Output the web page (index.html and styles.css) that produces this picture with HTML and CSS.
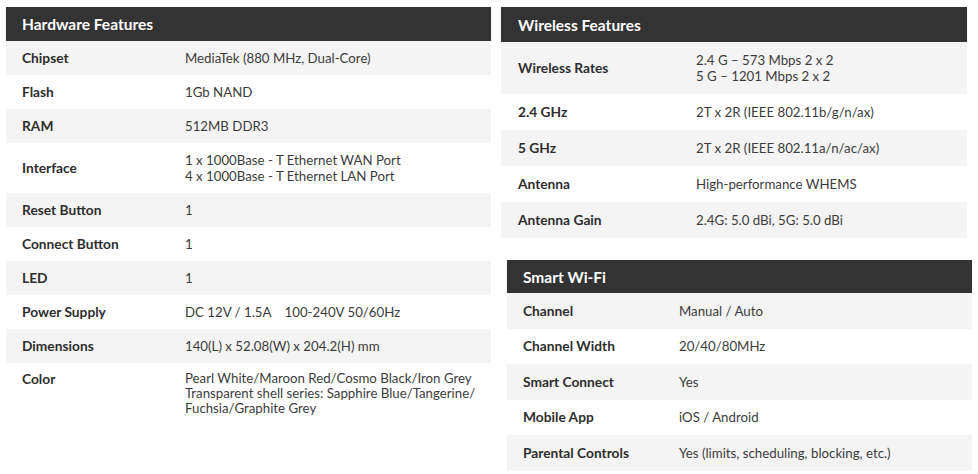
FILE: index.html
```html
<!DOCTYPE html>
<html>
<head>
<meta charset="utf-8">
<link rel="stylesheet" href="styles.css">
</head>
<body>
<div class="page">
  <div class="col col-left">
    <section class="spec spec-hw">
      <div class="spec-head">Hardware Features</div>
      <div class="row"><div class="lbl">Chipset</div><div class="val">MediaTek (880 MHz, Dual-Core)</div></div>
      <div class="row"><div class="lbl">Flash</div><div class="val">1Gb NAND</div></div>
      <div class="row"><div class="lbl">RAM</div><div class="val">512MB DDR3</div></div>
      <div class="row"><div class="lbl">Interface</div><div class="val">1 x 1000Base - T Ethernet WAN Port<br>4 x 1000Base - T Ethernet LAN Port</div></div>
      <div class="row"><div class="lbl">Reset Button</div><div class="val">1</div></div>
      <div class="row"><div class="lbl">Connect Button</div><div class="val">1</div></div>
      <div class="row"><div class="lbl">LED</div><div class="val">1</div></div>
      <div class="row"><div class="lbl">Power Supply</div><div class="val">DC 12V / 1.5A&nbsp;&nbsp;&nbsp; 100-240V 50/60Hz</div></div>
      <div class="row"><div class="lbl">Dimensions</div><div class="val">140(L) x 52.08(W) x 204.2(H) mm</div></div>
      <div class="row row-top"><div class="lbl">Color</div><div class="val val-tight">Pearl White/Maroon Red/Cosmo Black/Iron Grey<br>Transparent shell series: Sapphire Blue/Tangerine/<br>Fuchsia/Graphite Grey</div></div>
    </section>
  </div>
  <div class="col col-right">
    <section class="spec spec-wl">
      <div class="spec-head">Wireless Features</div>
      <div class="row"><div class="lbl">Wireless Rates</div><div class="val">2.4 G – 573 Mbps 2 x 2<br>5 G – 1201 Mbps 2 x 2</div></div>
      <div class="row"><div class="lbl">2.4 GHz</div><div class="val">2T x 2R (IEEE 802.11b/g/n/ax)</div></div>
      <div class="row"><div class="lbl">5 GHz</div><div class="val">2T x 2R (IEEE 802.11a/n/ac/ax)</div></div>
      <div class="row"><div class="lbl">Antenna</div><div class="val">High-performance WHEMS</div></div>
      <div class="row"><div class="lbl">Antenna Gain</div><div class="val">2.4G: 5.0 dBi, 5G: 5.0 dBi</div></div>
    </section>
    <section class="spec spec-sw">
      <div class="spec-head">Smart Wi-Fi</div>
      <div class="row"><div class="lbl">Channel</div><div class="val">Manual / Auto</div></div>
      <div class="row"><div class="lbl">Channel Width</div><div class="val">20/40/80MHz</div></div>
      <div class="row"><div class="lbl">Smart Connect</div><div class="val">Yes</div></div>
      <div class="row"><div class="lbl">Mobile App</div><div class="val">iOS / Android</div></div>
      <div class="row"><div class="lbl">Parental Controls</div><div class="val">Yes (limits, scheduling, blocking, etc.)</div></div>
    </section>
  </div>
</div>
</body>
</html>
```

FILE: styles.css
```css
* { box-sizing: border-box; }
html, body { margin: 0; padding: 0; background: #fff; }
body {
  font-family: Lato, "Noto Sans", sans-serif;
  font-size: 13.25px;
  color: #333;
}
.page {
  display: flex;
  align-items: flex-start;
  padding: 7px 0 0 6px;
  gap: 10px;
}
.col { display: flex; flex-direction: column; }
.col-left { width: 485px; }
.col-right { width: 471px; gap: 22px; }

.spec-head {
  background: #333;
  color: #fff;
  font-weight: 700;
  font-size: 15.5px;
  height: 34px;
  display: flex;
  align-items: center;
  padding-left: 16px;
  box-shadow: 0 1px 1px rgba(0,0,0,0.25);
}
.row {
  display: grid;
  align-items: center;
  line-height: 16px;
}
.row:nth-child(even) { background: #f4f4f4; }
.lbl { font-weight: 700; color: #2e2e2e; font-size: 13.75px; }
.val { color: #3c3c3c; }

.spec-hw .row { grid-template-columns: 179px 1fr; padding: 9px 0; }
.spec-hw .lbl { padding-left: 16px; }
.row-top { align-items: start; padding-top: 8px !important; }
.val-tight { line-height: 15px; }

.spec-wl { width: 466px; }
.spec-wl .spec-head { padding-left: 17px; height: 35px; }
.spec-wl .row { grid-template-columns: 195px 1fr; padding: 10px 0; }
.spec-wl .lbl { padding-left: 17px; }

.spec-sw { width: 465px; margin-left: 6px; }
.spec-sw .spec-head { height: 33px; }
.spec-sw .row { grid-template-columns: 172px 1fr; padding: 9.75px 0; }
.spec-sw .lbl { padding-left: 16px; }
```
